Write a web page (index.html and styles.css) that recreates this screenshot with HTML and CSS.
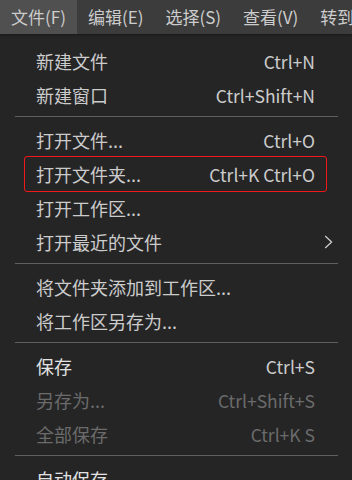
FILE: index.html
```html
<!DOCTYPE html>
<html lang="zh-CN">
<head>
<meta charset="utf-8">
<title>文件菜单</title>
<link rel="stylesheet" href="styles.css">
</head>
<body>
<div class="menubar">
  <div class="mb-item active">文件(F)</div>
  <div class="mb-item">编辑(E)</div>
  <div class="mb-item">选择(S)</div>
  <div class="mb-item">查看(V)</div>
  <div class="mb-item">转到(G)</div>
</div>
<div class="menu">
  <div class="item"><span class="label">新建文件</span><span class="key">Ctrl+N</span><span class="slot"></span></div>
  <div class="item"><span class="label">新建窗口</span><span class="key">Ctrl+Shift+N</span><span class="slot"></span></div>
  <div class="sep"></div>
  <div class="item"><span class="label">打开文件...</span><span class="key">Ctrl+O</span><span class="slot"></span></div>
  <div class="item focused"><span class="label">打开文件夹...</span><span class="key">Ctrl+K Ctrl+O</span><span class="slot"></span></div>
  <div class="item"><span class="label">打开工作区...</span><span class="key"></span><span class="slot"></span></div>
  <div class="item"><span class="label">打开最近的文件</span><span class="key"></span><span class="slot"><svg class="chev" width="9" height="14" viewBox="0 0 9 14"><path d="M1.2 1 L7.6 7 L1.2 13" fill="none" stroke="#cccccc" stroke-width="1.3"/></svg></span></div>
  <div class="sep"></div>
  <div class="item"><span class="label">将文件夹添加到工作区...</span><span class="key"></span><span class="slot"></span></div>
  <div class="item"><span class="label">将工作区另存为...</span><span class="key"></span><span class="slot"></span></div>
  <div class="sep"></div>
  <div class="item"><span class="label bright">保存</span><span class="key">Ctrl+S</span><span class="slot"></span></div>
  <div class="item disabled"><span class="label">另存为...</span><span class="key">Ctrl+Shift+S</span><span class="slot"></span></div>
  <div class="item disabled"><span class="label">全部保存</span><span class="key">Ctrl+K S</span><span class="slot"></span></div>
  <div class="sep"></div>
  <div class="item"><span class="label bright">自动保存</span><span class="key"></span><span class="slot"></span></div>
</div>
</body>
</html>
```

FILE: styles.css
```css
html, body {
  margin: 0;
  padding: 0;
  background: #252526;
  overflow: hidden;
}
body {
  width: 352px;
  height: 480px;
  font-family: "Noto Sans CJK SC", "Noto Sans", sans-serif;
  color: #cccccc;
}
.menubar {
  display: flex;
  height: 34px;
  background: #3c3c3c;
  white-space: nowrap;
  overflow: hidden;
}
.mb-item {
  flex: none;
  padding: 0 11px;
  line-height: 34px;
  font-size: 17px;
  color: #cccccc;
}
.mb-item.active {
  background: #505050;
}
.menu {
  padding-top: 10px;
  box-shadow: inset 0 3px 3px -2px rgba(0,0,0,0.35);
}
.item {
  position: relative;
  display: grid;
  grid-template-columns: 1fr auto 18px;
  align-items: center;
  height: 34px;
  margin: 0 13px 0 24px;
  padding: 0 6px 0 12px;
  font-size: 18px;
  white-space: nowrap;
}
.label {
  color: #cccccc;
}
.label.bright {
  color: #e2e2e2;
}
.key {
  color: #cccccc;
  font-size: 17.5px;
}
.slot {
  display: flex;
  justify-content: flex-end;
  align-items: center;
}
.chev {
  display: block;
}
.item.disabled .label,
.item.disabled .key {
  color: #6b6b6b;
}
.item.focused::after {
  content: "";
  position: absolute;
  left: 0;
  right: 12px;
  top: -1px;
  bottom: -1px;
  border: 1px solid #f01818;
  border-radius: 3px;
}
.sep {
  height: 1px;
  margin: 4px 14px 6px 15px;
  background: #606060;
}
```
